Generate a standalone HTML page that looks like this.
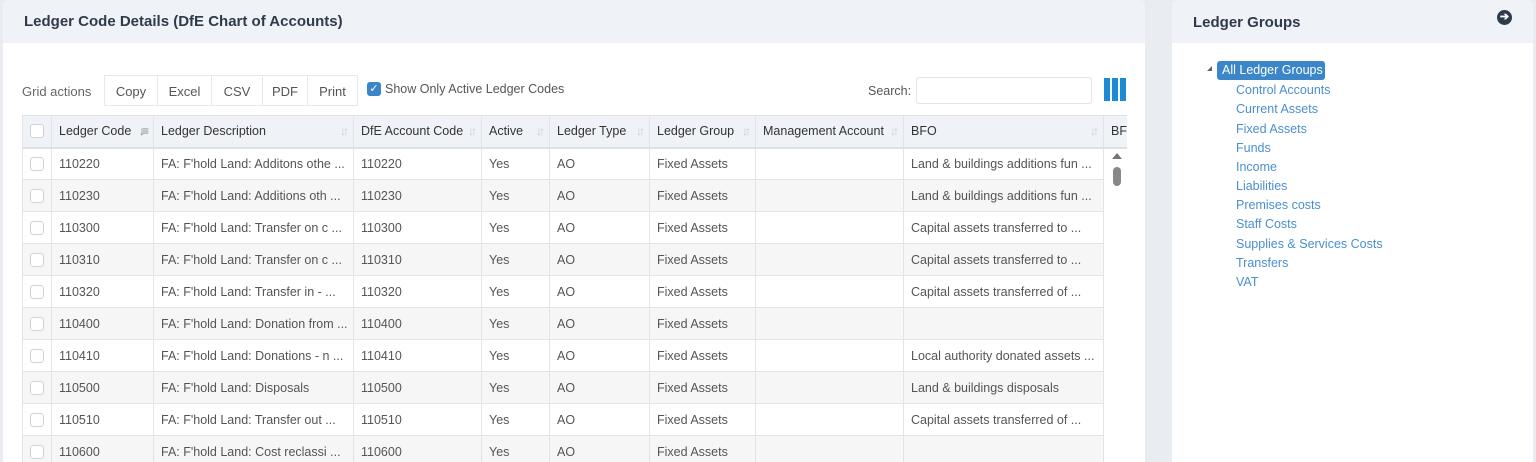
<!DOCTYPE html>
<html><head><style>
*{box-sizing:border-box;margin:0;padding:0}
html,body{width:1536px;height:462px;overflow:hidden}
body{background:#e9ecf1;font-family:"Liberation Sans",sans-serif;position:relative}
.p{position:absolute;background:#fff;border-radius:6px 6px 0 0;overflow:hidden}
.hd{height:43px;background:#eff2f7;color:#2f3a4a;font-weight:bold;font-size:15px;line-height:44px;padding-left:21px}
.abs{position:absolute}
.btn{position:absolute;top:75px;height:31px;border:1px solid #e6e8ec;font-size:13px;color:#555;line-height:31px;text-align:center;background:#fff}
table{border-collapse:collapse;table-layout:fixed;font-size:12.5px;color:#555}
td,th{border:1px solid #e2e4e8;height:32px;padding:0 7px;white-space:nowrap;overflow:hidden;text-align:left}
th{background:#eff2f7;color:#333;font-weight:normal;position:relative;border-bottom:2px solid #dde0e5}
th .s{position:absolute;right:7px;top:8px;color:#c8ccd2;font-size:12px;letter-spacing:-3px}
tr:nth-child(odd) td{background:#f6f6f7}
.cb{width:14px;height:14px;border:1px solid #cfd3d8;border-radius:3px;background:#fff;margin:0 auto}
.lg{position:absolute;left:1236px;font-size:12.5px;color:#4a8fd1}
</style></head><body>
<div class="p" style="left:3px;top:0;width:1142px;height:470px">
<div class="hd">Ledger Code Details (DfE Chart of Accounts)</div>
</div>
<div class="abs" style="left:22px;top:84px;font-size:13px;color:#666">Grid actions</div>
<div class="btn" style="left:104px;width:54px">Copy</div>
<div class="btn" style="left:157px;width:55px">Excel</div>
<div class="btn" style="left:211px;width:52px">CSV</div>
<div class="btn" style="left:262px;width:46px">PDF</div>
<div class="btn" style="left:307px;width:51px">Print</div>
<div class="abs" style="left:367px;top:82px;width:14px;height:14px;background:#3a86c8;border-radius:3px;color:#fff;font-size:11px;line-height:14px;text-align:center">✓</div>
<div class="abs" style="left:385px;top:82px;font-size:12.5px;color:#555">Show Only Active Ledger Codes</div>
<div class="abs" style="left:868px;top:84px;font-size:12.5px;color:#555">Search:</div>
<div class="abs" style="left:916px;top:77px;width:176px;height:27px;border:1px solid #e2e4e8;border-radius:3px"></div>
<div class="abs" style="left:1104px;top:78px;width:23px;height:23px;background:repeating-linear-gradient(90deg,#1d8ad6 0 6px,#fff 6px 8px)"></div>
<div class="abs" style="left:22px;top:115px;width:1105px;height:350px;overflow:hidden">
<table style="width:1140px">
<colgroup><col style="width:29px"><col style="width:102px"><col style="width:200px"><col style="width:128px"><col style="width:68px"><col style="width:100px"><col style="width:106px"><col style="width:148px"><col style="width:200px"><col style="width:59px"></colgroup>
<tr><th><div class="cb"></div></th><th>Ledger Code<span class="s" style="color:#888">↓≡</span></th><th>Ledger Description<span class="s">↓↑</span></th><th>DfE Account Code<span class="s">↓↑</span></th><th>Active<span class="s">↓↑</span></th><th>Ledger Type<span class="s">↓↑</span></th><th>Ledger Group<span class="s">↓↑</span></th><th>Management Account<span class="s">↓↑</span></th><th>BFO<span class="s">↓↑</span></th><th style="background:#eff2f7">BFO</th></tr>
<tr><td><div class="cb"></div></td><td>110220</td><td>FA: F'hold Land: Additons othe ...</td><td>110220</td><td>Yes</td><td>AO</td><td>Fixed Assets</td><td></td><td>Land &amp; buildings additions fun ...</td><td style="background:#fff;border:none"></td></tr>
<tr><td><div class="cb"></div></td><td>110230</td><td>FA: F'hold Land: Additions oth ...</td><td>110230</td><td>Yes</td><td>AO</td><td>Fixed Assets</td><td></td><td>Land &amp; buildings additions fun ...</td><td style="background:#fff;border:none"></td></tr>
<tr><td><div class="cb"></div></td><td>110300</td><td>FA: F'hold Land: Transfer on c ...</td><td>110300</td><td>Yes</td><td>AO</td><td>Fixed Assets</td><td></td><td>Capital assets transferred to ...</td><td style="background:#fff;border:none"></td></tr>
<tr><td><div class="cb"></div></td><td>110310</td><td>FA: F'hold Land: Transfer on c ...</td><td>110310</td><td>Yes</td><td>AO</td><td>Fixed Assets</td><td></td><td>Capital assets transferred to ...</td><td style="background:#fff;border:none"></td></tr>
<tr><td><div class="cb"></div></td><td>110320</td><td>FA: F'hold Land: Transfer in - ...</td><td>110320</td><td>Yes</td><td>AO</td><td>Fixed Assets</td><td></td><td>Capital assets transferred of ...</td><td style="background:#fff;border:none"></td></tr>
<tr><td><div class="cb"></div></td><td>110400</td><td>FA: F'hold Land: Donation from ...</td><td>110400</td><td>Yes</td><td>AO</td><td>Fixed Assets</td><td></td><td></td><td style="background:#fff;border:none"></td></tr>
<tr><td><div class="cb"></div></td><td>110410</td><td>FA: F'hold Land: Donations - n ...</td><td>110410</td><td>Yes</td><td>AO</td><td>Fixed Assets</td><td></td><td>Local authority donated assets ...</td><td style="background:#fff;border:none"></td></tr>
<tr><td><div class="cb"></div></td><td>110500</td><td>FA: F'hold Land: Disposals</td><td>110500</td><td>Yes</td><td>AO</td><td>Fixed Assets</td><td></td><td>Land &amp; buildings disposals</td><td style="background:#fff;border:none"></td></tr>
<tr><td><div class="cb"></div></td><td>110510</td><td>FA: F'hold Land: Transfer out ...</td><td>110510</td><td>Yes</td><td>AO</td><td>Fixed Assets</td><td></td><td>Capital assets transferred of ...</td><td style="background:#fff;border:none"></td></tr>
<tr><td><div class="cb"></div></td><td>110600</td><td>FA: F'hold Land: Cost reclassi ...</td><td>110600</td><td>Yes</td><td>AO</td><td>Fixed Assets</td><td></td><td></td><td style="background:#fff;border:none"></td></tr>
</table>
</div>
<div class="abs" style="left:1112px;top:153px;width:0;height:0;border-left:5px solid transparent;border-right:5px solid transparent;border-bottom:6px solid #777"></div>
<div class="abs" style="left:1113px;top:167px;width:8px;height:19px;background:#888;border-radius:4px"></div>
<div class="p" style="left:1172px;top:0;width:361px;height:470px">
<div class="hd" style="line-height:45px">Ledger Groups</div>
</div>
<div class="abs" style="left:1497px;top:10px;width:15px;height:15px;background:#2f3a4a;border-radius:50%;color:#fff;font-size:11px;line-height:15px;text-align:center;font-weight:bold">➔</div>
<div class="abs" style="left:1207px;top:66px;width:0;height:0;border-left:5px solid transparent;border-bottom:5px solid #666"></div>
<div class="abs" style="left:1217px;top:61px;width:108px;height:19px;background:#3a86c8;border-radius:3px;color:#fff;font-size:12.5px;line-height:19px;padding-left:5px">All Ledger Groups</div>
<div class="lg" style="top:83px">Control Accounts</div>
<div class="lg" style="top:102px">Current Assets</div>
<div class="lg" style="top:122px">Fixed Assets</div>
<div class="lg" style="top:141px">Funds</div>
<div class="lg" style="top:160px">Income</div>
<div class="lg" style="top:179px">Liabilities</div>
<div class="lg" style="top:198px">Premises costs</div>
<div class="lg" style="top:217px">Staff Costs</div>
<div class="lg" style="top:237px">Supplies &amp; Services Costs</div>
<div class="lg" style="top:256px">Transfers</div>
<div class="lg" style="top:275px">VAT</div>
</body></html>
